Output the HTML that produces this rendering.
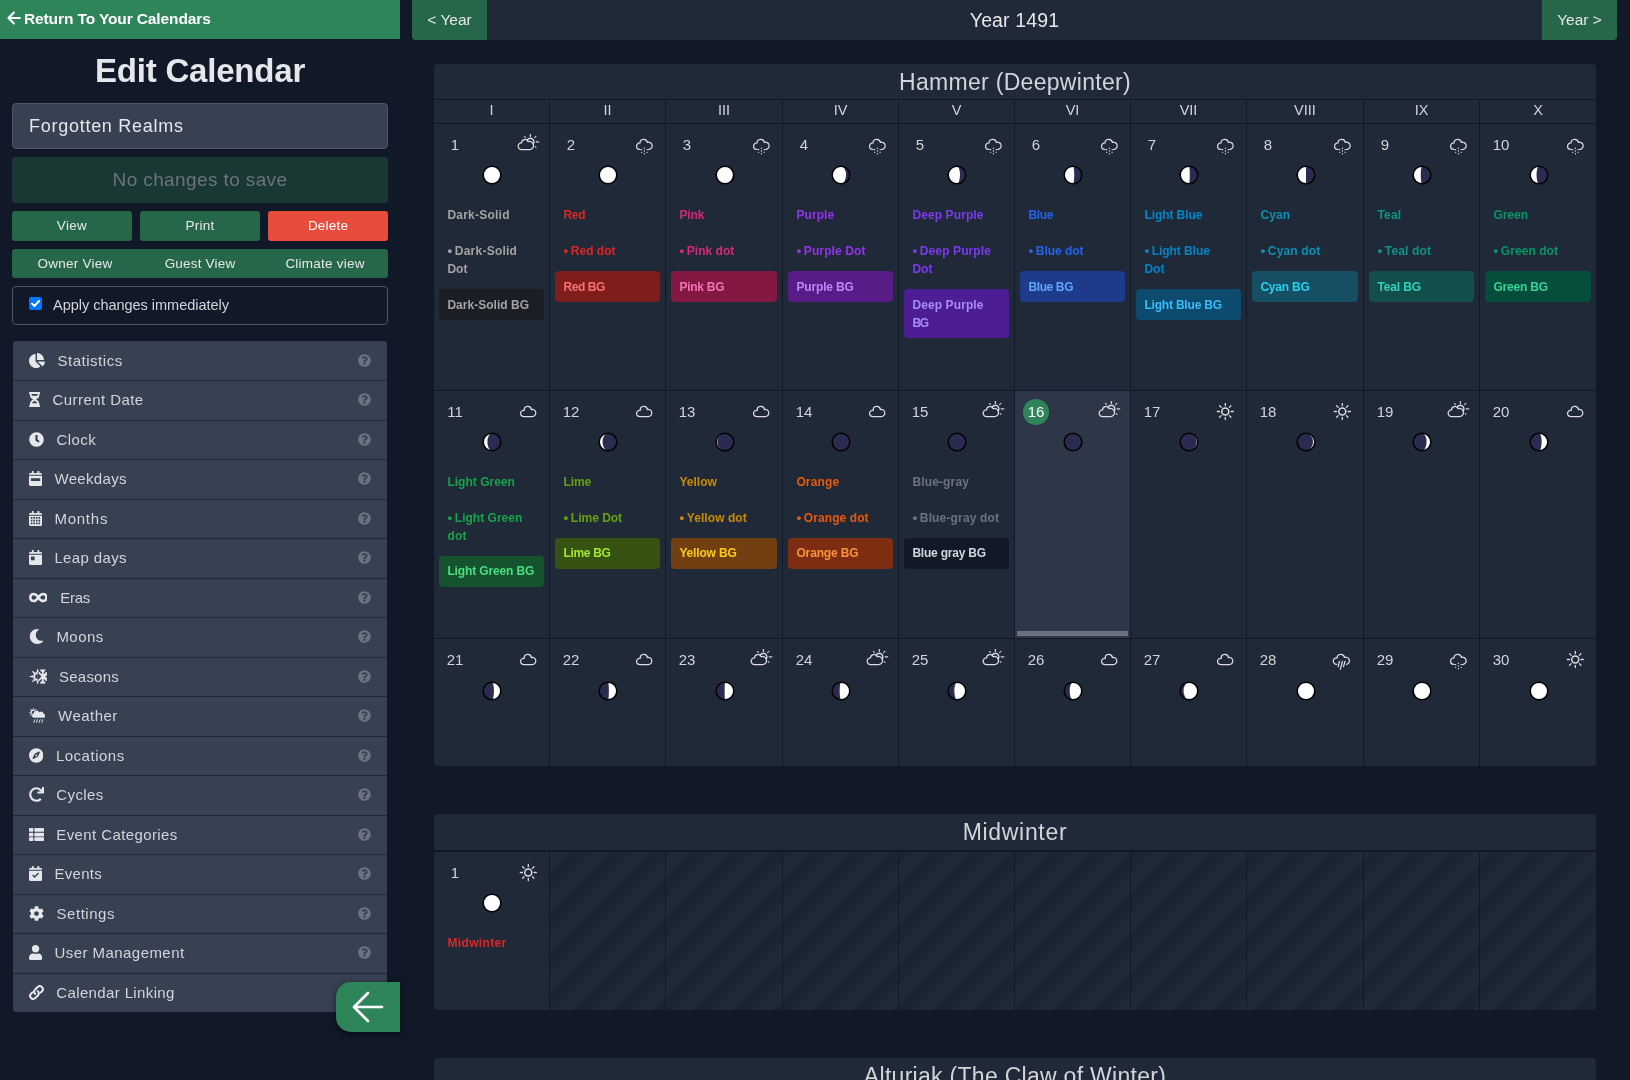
<!DOCTYPE html>
<html lang="en">
<head>
<meta charset="utf-8">
<title>Edit Calendar - Forgotten Realms</title>
<style>
*{box-sizing:border-box;}
html,body{margin:0;padding:0;}
body{width:1630px;height:1080px;overflow:hidden;background:#111827;color:#d1d5db;font-family:"Liberation Sans",sans-serif;position:relative;}
svg{display:block;}
/* ---------- sidebar ---------- */
#wrap{position:absolute;left:0;top:0;width:1630px;height:1080px;overflow:hidden;will-change:transform;}
#side{position:absolute;left:0;top:0;width:400px;height:1080px;}
#ret{position:absolute;left:0;top:0;width:400px;height:39px;background:#2f855a;color:#fff;font-weight:bold;font-size:15.5px;line-height:39px;}
#ret svg{position:absolute;left:7.2px;top:11.3px;}
#ret span{position:absolute;left:24px;top:-1px;white-space:nowrap;}
#title{position:absolute;left:0;top:49px;width:400px;text-align:center;font-weight:bold;font-size:33px;line-height:44px;color:#e5e7eb;white-space:nowrap;}
#name{position:absolute;left:12px;top:103px;width:376px;height:46px;background:#374151;border:1px solid #4b5563;border-radius:4px;color:#e5e7eb;font-size:18px;line-height:44px;padding-left:16px;white-space:nowrap;}
#save{position:absolute;left:12px;top:157px;width:376px;height:46px;background:#1a3833;border-radius:4px;color:#6b7280;font-size:19px;line-height:46px;text-align:center;white-space:nowrap;}
.btn{position:absolute;top:211px;width:120px;height:30px;border-radius:3px;background:#276749;color:#e5e7eb;font-size:13.5px;line-height:30px;text-align:center;white-space:nowrap;}
#grp{position:absolute;left:12px;top:249px;width:376px;height:29px;border-radius:3px;background:#276749;color:#e5e7eb;font-size:13.5px;line-height:29px;white-space:nowrap;}
#grp span{position:absolute;top:0;text-align:center;}
#apply{position:absolute;left:12px;top:286px;width:376px;height:39px;border:1px solid #4b5563;border-radius:4px;color:#d1d5db;font-size:14.5px;line-height:37px;white-space:nowrap;}
#apply i{position:absolute;left:16px;top:10px;width:13px;height:13px;background:#0075ff;border-radius:2px;}
#apply i svg{position:absolute;left:1px;top:1px;}
#apply span{position:absolute;left:40px;top:0;}
#acc{position:absolute;left:13px;top:341px;width:374px;height:671px;background:#374151;border-radius:3px;overflow:hidden;}
.it{position:absolute;left:0;width:374px;height:39.5px;border-bottom:1px solid #1f2937;color:#d1d5db;font-size:15px;white-space:nowrap;}
.it .ic{position:absolute;left:15.6px;top:11.6px;}
.it .tx{position:absolute;top:0;line-height:38.5px;}
.it .q{position:absolute;left:345px;top:12.4px;}
#fab{position:absolute;left:336px;top:982px;width:64px;height:50px;background:#2f855a;border-radius:15px 0 0 15px;box-shadow:0 2px 6px rgba(0,0,0,.5);}
#fab svg{position:absolute;left:15px;top:7.800px;}
/* ---------- main ---------- */
#top{position:absolute;left:412px;top:0;width:1205px;height:40px;background:#1f2937;border-radius:0 0 4px 4px;overflow:hidden;color:#e5e7eb;}
#top .yb{position:absolute;top:0;width:75px;height:40px;background:#276749;color:#e5e7eb;font-size:15.5px;line-height:39px;text-align:center;white-space:nowrap;}
#top .yt{position:absolute;left:0;top:0;width:1205px;text-align:center;font-size:19.5px;line-height:40px;white-space:nowrap;}
.card{position:absolute;left:434px;width:1162px;background:#111827;border-radius:4px;overflow:hidden;}
.mt{position:absolute;left:0;top:0;width:1162px;height:35px;background:#1f2937;color:#d1d5db;text-align:center;font-size:23px;line-height:37px;white-space:nowrap;}
.grid{position:absolute;left:0;width:1162px;display:grid;grid-template-columns:115px 115px 116px 115px 115px 115px 115px 116px 115px 116px;column-gap:1px;}
.wd{background:#1f2937;color:#d1d5db;text-align:center;font-size:14.5px;line-height:20px;}
.day{position:relative;background:#1f2937;overflow:hidden;}
.day.today{background:#2e3748;}
.stripes{position:absolute;left:116px;top:0;width:1046px;height:158px;background:repeating-linear-gradient(135deg,rgba(17,24,39,.3) 0 1.3px,rgba(17,24,39,0) 1.3px 15.5px,rgba(17,24,39,.3) 15.5px 28.28px);}
.num{position:absolute;left:8px;top:8px;width:26px;height:26px;border-radius:13px;text-align:center;font-size:15px;line-height:26px;color:#d1d5db;}
.today .num{background:#2f855a;color:#fff;}
.wi{position:absolute;right:0;top:0;}
.mn{position:absolute;left:50%;margin-left:-9.500px;top:41px;}
.evs{position:absolute;left:5px;right:5px;top:74.5px;}
.ev{margin-bottom:5px;padding:7.5px 4px 5.5px 8.4px;border-radius:4px;font-weight:bold;font-size:12px;line-height:18px;white-space:nowrap;}
.dot{font-weight:bold;font-size:13.5px;line-height:12px;margin-right:2.7px;}
.bar{position:absolute;left:2px;right:2px;bottom:2px;height:5px;background:#6b7280;}
.r2 .ev.bg{padding-top:6.5px;padding-bottom:6.5px;}
.r3 .mn{top:42px;}
#sb{position:absolute;left:1617px;top:0;width:13px;height:1080px;background:#121a2a;}
</style>
</head>
<body>
<div id="wrap">
<div id="side">
  <div id="ret"><svg width="14" height="14" viewBox="0 0 14 14"><path d="M12.8 7H2M6.9 1.600L1.5 7l5.400 5.400" fill="none" stroke="#fff" stroke-width="2.1" stroke-linecap="round" stroke-linejoin="round"/></svg><span style="letter-spacing:-0.117px">Return To Your Calendars</span></div>
  <div id="title"><span style="letter-spacing:-0.202px">Edit Calendar</span></div>
  <div id="name"><span style="letter-spacing:0.729px">Forgotten Realms</span></div>
  <div id="save"><span style="letter-spacing:0.386px">No changes to save</span></div>
  <div class="btn" style="left:12px"><span style="letter-spacing:0.327px">View</span></div>
  <div class="btn" style="left:140px"><span style="letter-spacing:0.21px">Print</span></div>
  <div class="btn" style="left:268px;background:#e74c3c;color:#fff"><span style="letter-spacing:0.195px">Delete</span></div>
  <div id="grp"><span style="left:0;width:126px;letter-spacing:0.23px">Owner View</span><span style="left:126px;width:124px;letter-spacing:0.19px">Guest View</span><span style="left:250px;width:126px;letter-spacing:0.225px">Climate view</span></div>
  <div id="apply"><i><svg width="11" height="11" viewBox="0 0 11 11"><path d="M2 5.6l2.400 2.400L9 3" fill="none" stroke="#fff" stroke-width="2" stroke-linecap="round" stroke-linejoin="round"/></svg></i><span style="letter-spacing:-0.021px">Apply changes immediately</span></div>
  <div id="acc">
<div class="it" style="top:0.60px"><svg class="ic" style="top:11.40px" width="15.94" height="15" viewBox="0 0 544 512" fill="#e5e7eb" ><path d="M527.8 288H290.5l158 158c6 6 16 6.500 22.200.800 38.700-36.500 65.300-85.600 73.100-140.900 1.300-9.500-6.500-17.900-16-17.900zM512 223.200C503.700 103.800 408.200 8.300 288.800 0 279.700-.600 272 7.100 272 16.200V240h223.800c9.100 0 16.800-7.700 16.200-16.800zM224 288V50.700c0-9.500-8.400-17.300-17.900-16C86.900 51.500-4.200 155.600.100 280.400 4.600 408.500 114.900 513.600 243.100 512c50.400-.600 96.900-16.900 135.200-44 7.900-5.600 8.400-17.200 1.600-24L224 288z"/></svg><span class="tx" style="left:44.4px;letter-spacing:0.532px">Statistics</span><svg class="q" style="top:12.40px" width="13" height="13" viewBox="0 0 512 512" fill="#6b7280"><path d="M504 256c0 136.997-111.043 248-248 248S8 392.997 8 256C8 119.083 119.043 8 256 8s248 111.083 248 248zM262.655 90c-54.497 0-89.255 22.957-116.549 63.758-3.536 5.286-2.353 12.415 2.715 16.258l34.699 26.310c5.205 3.947 12.621 3.008 16.665-2.122 17.864-22.658 30.113-35.797 57.303-35.797 20.429 0 45.698 13.148 45.698 32.958 0 14.976-12.363 22.667-32.534 33.976C247.128 238.528 216 254.941 216 296v4c0 6.627 5.373 12 12 12h56c6.627 0 12-5.373 12-12v-1.333c0-28.462 83.186-29.647 83.186-106.667 0-58.002-60.165-102-116.531-102zM256 338c-25.365 0-46 20.635-46 46 0 25.364 20.635 46 46 46s46-20.636 46-46c0-25.365-20.635-46-46-46z"/></svg></div>
<div class="it" style="top:40.10px"><svg class="ic" style="top:10.90px" width="11.25" height="15" viewBox="0 0 384 512" fill="#e5e7eb" ><path d="M360 0H24C10.700 0 0 10.700 0 24v16c0 13.300 10.700 24 24 24 0 91 51 167.700 120.800 192C75 280.300 24 357 24 448c-13.300 0-24 10.700-24 24v16c0 13.300 10.700 24 24 24h336c13.300 0 24-10.700 24-24v-16c0-13.300-10.700-24-24-24 0-91-51-167.700-120.800-192C309 231.700 360 155 360 64c13.300 0 24-10.700 24-24V24c0-13.300-10.700-24-24-24zm-75.100 384H99.100c17.100-46.800 52.100-80 92.900-80 40.700 0 75.800 33.200 92.900 80zm0-256H99.100C92.500 108.800 88 87.200 88 64h208c0 23.200-4.500 44.800-11.100 64z"/></svg><span class="tx" style="left:39.6px;letter-spacing:0.421px">Current Date</span><svg class="q" style="top:11.90px" width="13" height="13" viewBox="0 0 512 512" fill="#6b7280"><path d="M504 256c0 136.997-111.043 248-248 248S8 392.997 8 256C8 119.083 119.043 8 256 8s248 111.083 248 248zM262.655 90c-54.497 0-89.255 22.957-116.549 63.758-3.536 5.286-2.353 12.415 2.715 16.258l34.699 26.310c5.205 3.947 12.621 3.008 16.665-2.122 17.864-22.658 30.113-35.797 57.303-35.797 20.429 0 45.698 13.148 45.698 32.958 0 14.976-12.363 22.667-32.534 33.976C247.128 238.528 216 254.941 216 296v4c0 6.627 5.373 12 12 12h56c6.627 0 12-5.373 12-12v-1.333c0-28.462 83.186-29.647 83.186-106.667 0-58.002-60.165-102-116.531-102zM256 338c-25.365 0-46 20.635-46 46 0 25.364 20.635 46 46 46s46-20.636 46-46c0-25.365-20.635-46-46-46z"/></svg></div>
<div class="it" style="top:79.60px"><svg class="ic" style="top:11.40px" width="15" height="15" viewBox="0 0 512 512" fill="#e5e7eb" ><path d="M256 8C119 8 8 119 8 256s111 248 248 248 248-111 248-248S393 8 256 8zm57.100 350.100L224.900 294c-3.100-2.300-4.900-5.900-4.900-9.700V116c0-6.600 5.400-12 12-12h48c6.600 0 12 5.400 12 12v137.700l63.500 46.200c5.400 3.900 6.500 11.400 2.600 16.800l-28.200 38.800c-3.900 5.300-11.400 6.500-16.800 2.600z"/></svg><span class="tx" style="left:43.4px;letter-spacing:0.473px">Clock</span><svg class="q" style="top:12.40px" width="13" height="13" viewBox="0 0 512 512" fill="#6b7280"><path d="M504 256c0 136.997-111.043 248-248 248S8 392.997 8 256C8 119.083 119.043 8 256 8s248 111.083 248 248zM262.655 90c-54.497 0-89.255 22.957-116.549 63.758-3.536 5.286-2.353 12.415 2.715 16.258l34.699 26.310c5.205 3.947 12.621 3.008 16.665-2.122 17.864-22.658 30.113-35.797 57.303-35.797 20.429 0 45.698 13.148 45.698 32.958 0 14.976-12.363 22.667-32.534 33.976C247.128 238.528 216 254.941 216 296v4c0 6.627 5.373 12 12 12h56c6.627 0 12-5.373 12-12v-1.333c0-28.462 83.186-29.647 83.186-106.667 0-58.002-60.165-102-116.531-102zM256 338c-25.365 0-46 20.635-46 46 0 25.364 20.635 46 46 46s46-20.636 46-46c0-25.365-20.635-46-46-46z"/></svg></div>
<div class="it" style="top:119.10px"><svg class="ic" style="top:10.90px" width="13.125" height="15" viewBox="0 0 448 512" fill="#e5e7eb" ><path fill-rule="evenodd" d="M0 128h448v-16c0-26.500-21.500-48-48-48h-48V16c0-8.800-7.200-16-16-16h-32c-8.800 0-16 7.200-16 16v48H160V16c0-8.800-7.200-16-16-16h-32c-8.800 0-16 7.200-16 16v48H48C21.500 64 0 85.500 0 112v16zM0 160v304c0 26.500 21.500 48 48 48h352c26.500 0 48-21.500 48-48V160H0zM64 264c0-8.800 7.200-16 16-16h288c8.800 0 16 7.200 16 16v64c0 8.800-7.200 16-16 16H80c-8.800 0-16-7.200-16-16v-64z"/></svg><span class="tx" style="left:41.4px;letter-spacing:0.349px">Weekdays</span><svg class="q" style="top:11.90px" width="13" height="13" viewBox="0 0 512 512" fill="#6b7280"><path d="M504 256c0 136.997-111.043 248-248 248S8 392.997 8 256C8 119.083 119.043 8 256 8s248 111.083 248 248zM262.655 90c-54.497 0-89.255 22.957-116.549 63.758-3.536 5.286-2.353 12.415 2.715 16.258l34.699 26.310c5.205 3.947 12.621 3.008 16.665-2.122 17.864-22.658 30.113-35.797 57.303-35.797 20.429 0 45.698 13.148 45.698 32.958 0 14.976-12.363 22.667-32.534 33.976C247.128 238.528 216 254.941 216 296v4c0 6.627 5.373 12 12 12h56c6.627 0 12-5.373 12-12v-1.333c0-28.462 83.186-29.647 83.186-106.667 0-58.002-60.165-102-116.531-102zM256 338c-25.365 0-46 20.635-46 46 0 25.364 20.635 46 46 46s46-20.636 46-46c0-25.365-20.635-46-46-46z"/></svg></div>
<div class="it" style="top:158.60px"><svg class="ic" style="top:11.40px" width="13.125" height="15" viewBox="0 0 448 512" fill="#e5e7eb" ><path fill-rule="evenodd" d="M0 128h448v-16c0-26.500-21.500-48-48-48h-48V16c0-8.800-7.200-16-16-16h-32c-8.800 0-16 7.200-16 16v48H160V16c0-8.800-7.200-16-16-16h-32c-8.800 0-16 7.200-16 16v48H48C21.500 64 0 85.500 0 112v16zM0 160v304c0 26.500 21.500 48 48 48h352c26.500 0 48-21.500 48-48V160H0zM60 208h56v56h-56zM148 208h56v56h-56zM236 208h56v56h-56zM324 208h56v56h-56zM60 300h56v56h-56zM148 300h56v56h-56zM236 300h56v56h-56zM324 300h56v56h-56zM60 392h56v56h-56zM148 392h56v56h-56zM236 392h56v56h-56zM324 392h56v56h-56z"/></svg><span class="tx" style="left:41.4px;letter-spacing:0.762px">Months</span><svg class="q" style="top:12.40px" width="13" height="13" viewBox="0 0 512 512" fill="#6b7280"><path d="M504 256c0 136.997-111.043 248-248 248S8 392.997 8 256C8 119.083 119.043 8 256 8s248 111.083 248 248zM262.655 90c-54.497 0-89.255 22.957-116.549 63.758-3.536 5.286-2.353 12.415 2.715 16.258l34.699 26.310c5.205 3.947 12.621 3.008 16.665-2.122 17.864-22.658 30.113-35.797 57.303-35.797 20.429 0 45.698 13.148 45.698 32.958 0 14.976-12.363 22.667-32.534 33.976C247.128 238.528 216 254.941 216 296v4c0 6.627 5.373 12 12 12h56c6.627 0 12-5.373 12-12v-1.333c0-28.462 83.186-29.647 83.186-106.667 0-58.002-60.165-102-116.531-102zM256 338c-25.365 0-46 20.635-46 46 0 25.364 20.635 46 46 46s46-20.636 46-46c0-25.365-20.635-46-46-46z"/></svg></div>
<div class="it" style="top:198.10px"><svg class="ic" style="top:10.90px" width="13.125" height="15" viewBox="0 0 448 512" fill="#e5e7eb" ><path fill-rule="evenodd" d="M0 128h448v-16c0-26.500-21.500-48-48-48h-48V16c0-8.800-7.200-16-16-16h-32c-8.800 0-16 7.200-16 16v48H160V16c0-8.800-7.200-16-16-16h-32c-8.800 0-16 7.200-16 16v48H48C21.500 64 0 85.500 0 112v16zM0 160v304c0 26.500 21.500 48 48 48h352c26.500 0 48-21.500 48-48V160H0zM64 240c0-8.800 7.200-16 16-16h96c8.800 0 16 7.200 16 16v96c0 8.800-7.200 16-16 16H80c-8.800 0-16-7.200-16-16v-96z"/></svg><span class="tx" style="left:41.4px;letter-spacing:0.372px">Leap days</span><svg class="q" style="top:11.90px" width="13" height="13" viewBox="0 0 512 512" fill="#6b7280"><path d="M504 256c0 136.997-111.043 248-248 248S8 392.997 8 256C8 119.083 119.043 8 256 8s248 111.083 248 248zM262.655 90c-54.497 0-89.255 22.957-116.549 63.758-3.536 5.286-2.353 12.415 2.715 16.258l34.699 26.310c5.205 3.947 12.621 3.008 16.665-2.122 17.864-22.658 30.113-35.797 57.303-35.797 20.429 0 45.698 13.148 45.698 32.958 0 14.976-12.363 22.667-32.534 33.976C247.128 238.528 216 254.941 216 296v4c0 6.627 5.373 12 12 12h56c6.627 0 12-5.373 12-12v-1.333c0-28.462 83.186-29.647 83.186-106.667 0-58.002-60.165-102-116.531-102zM256 338c-25.365 0-46 20.635-46 46 0 25.364 20.635 46 46 46s46-20.636 46-46c0-25.365-20.635-46-46-46z"/></svg></div>
<div class="it" style="top:237.60px"><svg class="ic" style="top:11.40px" width="18.75" height="15" viewBox="0 0 640 512" fill="#e5e7eb" ><path fill="none" stroke="#e5e7eb" stroke-width="86" d="M320 256c-52-80-96-122-160-122-66 0-117 54-117 122s51 122 117 122c64 0 108-42 160-122zM320 256c52-80 96-122 160-122 66 0 117 54 117 122s-51 122-117 122c-64 0-108-42-160-122z"/></svg><span class="tx" style="left:47.2px;letter-spacing:-0.248px">Eras</span><svg class="q" style="top:12.40px" width="13" height="13" viewBox="0 0 512 512" fill="#6b7280"><path d="M504 256c0 136.997-111.043 248-248 248S8 392.997 8 256C8 119.083 119.043 8 256 8s248 111.083 248 248zM262.655 90c-54.497 0-89.255 22.957-116.549 63.758-3.536 5.286-2.353 12.415 2.715 16.258l34.699 26.310c5.205 3.947 12.621 3.008 16.665-2.122 17.864-22.658 30.113-35.797 57.303-35.797 20.429 0 45.698 13.148 45.698 32.958 0 14.976-12.363 22.667-32.534 33.976C247.128 238.528 216 254.941 216 296v4c0 6.627 5.373 12 12 12h56c6.627 0 12-5.373 12-12v-1.333c0-28.462 83.186-29.647 83.186-106.667 0-58.002-60.165-102-116.531-102zM256 338c-25.365 0-46 20.635-46 46 0 25.364 20.635 46 46 46s46-20.636 46-46c0-25.365-20.635-46-46-46z"/></svg></div>
<div class="it" style="top:277.10px"><svg class="ic" style="top:10.90px" width="15" height="15" viewBox="0 0 512 512" fill="#e5e7eb" ><path d="M283.211 512c78.962 0 151.079-35.925 198.857-94.792 7.068-8.708-.639-21.430-11.562-19.350-124.203 23.654-238.262-71.576-238.262-196.954 0-72.222 38.662-138.635 101.498-174.394 9.686-5.512 7.250-20.197-3.756-22.230A258.156 258.156 0 0 0 283.211 0c-141.309 0-256 114.511-256 256 0 141.309 114.511 256 256 256z"/></svg><span class="tx" style="left:43.4px;letter-spacing:0.469px">Moons</span><svg class="q" style="top:11.90px" width="13" height="13" viewBox="0 0 512 512" fill="#6b7280"><path d="M504 256c0 136.997-111.043 248-248 248S8 392.997 8 256C8 119.083 119.043 8 256 8s248 111.083 248 248zM262.655 90c-54.497 0-89.255 22.957-116.549 63.758-3.536 5.286-2.353 12.415 2.715 16.258l34.699 26.310c5.205 3.947 12.621 3.008 16.665-2.122 17.864-22.658 30.113-35.797 57.303-35.797 20.429 0 45.698 13.148 45.698 32.958 0 14.976-12.363 22.667-32.534 33.976C247.128 238.528 216 254.941 216 296v4c0 6.627 5.373 12 12 12h56c6.627 0 12-5.373 12-12v-1.333c0-28.462 83.186-29.647 83.186-106.667 0-58.002-60.165-102-116.531-102zM256 338c-25.365 0-46 20.635-46 46 0 25.364 20.635 46 46 46s46-20.636 46-46c0-25.365-20.635-46-46-46z"/></svg></div>
<div class="it" style="top:316.60px"><svg class="ic" style="top:11.40px" width="18.75" height="15" viewBox="0 0 640 512" fill="#e5e7eb" ><path d="M334.6 411.3L296.0 548.0L257.4 411.3zM213.5 393.1L89.5 462.5L158.9 338.5zM140.7 294.6L4.0 256.0L140.7 217.4zM158.9 173.5L89.5 49.5L213.5 118.9zM257.4 100.7L296.0 -36.0L334.6 100.7z"/><path d="M296 104a152 152 0 0 0 0 304z"/><path fill="#374151" d="M296 170a86 86 0 0 0 0 172z"/><path fill="none" stroke="#e5e7eb" stroke-width="58" stroke-linecap="round" d="M470 34v444M346 130l240 252M346 382l240-252M410 40l60 62 60-62M410 472l60-62 60 62M606 196l-76 22 14 78M606 316l-76-22 14-78"/></svg><span class="tx" style="left:46.1px;letter-spacing:0.204px">Seasons</span><svg class="q" style="top:12.40px" width="13" height="13" viewBox="0 0 512 512" fill="#6b7280"><path d="M504 256c0 136.997-111.043 248-248 248S8 392.997 8 256C8 119.083 119.043 8 256 8s248 111.083 248 248zM262.655 90c-54.497 0-89.255 22.957-116.549 63.758-3.536 5.286-2.353 12.415 2.715 16.258l34.699 26.310c5.205 3.947 12.621 3.008 16.665-2.122 17.864-22.658 30.113-35.797 57.303-35.797 20.429 0 45.698 13.148 45.698 32.958 0 14.976-12.363 22.667-32.534 33.976C247.128 238.528 216 254.941 216 296v4c0 6.627 5.373 12 12 12h56c6.627 0 12-5.373 12-12v-1.333c0-28.462 83.186-29.647 83.186-106.667 0-58.002-60.165-102-116.531-102zM256 338c-25.365 0-46 20.635-46 46 0 25.364 20.635 46 46 46s46-20.636 46-46c0-25.365-20.635-46-46-46z"/></svg></div>
<div class="it" style="top:356.10px"><svg class="ic" style="top:10.90px" width="16.875" height="15" viewBox="0 0 576 512" fill="#e5e7eb" ><path d="M250.9 124.9L320.0 150.0L250.9 175.1zM239.1 203.6L270.2 270.2L203.6 239.1zM175.1 250.9L150.0 320.0L124.9 250.9zM96.4 239.1L29.8 270.2L60.9 203.6zM49.1 175.1L-20.0 150.0L49.1 124.9zM60.9 96.4L29.8 29.8L96.4 60.9zM124.9 49.1L150.0 -20.0L175.1 49.1zM203.6 60.9L270.2 29.8L239.1 96.4z"/><circle cx="150" cy="150" r="96"/><circle cx="150" cy="150" r="58" fill="#374151"/><path stroke="#374151" stroke-width="26" d="M510 192c-8-46-46-80-94-80-22 0-44 8-60 22-20-32-54-54-96-54-58 0-106 44-112 100-36 10-62 42-62 80 0 46 38 84 84 84h328c40 0 72-32 72-72 0-38-26-70-60-80z"/><path fill="none" stroke="#e5e7eb" stroke-width="32" stroke-linecap="round" d="M200 400l-36 90M290 400l-36 90M380 400l-36 90M470 400l-36 90"/></svg><span class="tx" style="left:45.1px;letter-spacing:0.463px">Weather</span><svg class="q" style="top:11.90px" width="13" height="13" viewBox="0 0 512 512" fill="#6b7280"><path d="M504 256c0 136.997-111.043 248-248 248S8 392.997 8 256C8 119.083 119.043 8 256 8s248 111.083 248 248zM262.655 90c-54.497 0-89.255 22.957-116.549 63.758-3.536 5.286-2.353 12.415 2.715 16.258l34.699 26.310c5.205 3.947 12.621 3.008 16.665-2.122 17.864-22.658 30.113-35.797 57.303-35.797 20.429 0 45.698 13.148 45.698 32.958 0 14.976-12.363 22.667-32.534 33.976C247.128 238.528 216 254.941 216 296v4c0 6.627 5.373 12 12 12h56c6.627 0 12-5.373 12-12v-1.333c0-28.462 83.186-29.647 83.186-106.667 0-58.002-60.165-102-116.531-102zM256 338c-25.365 0-46 20.635-46 46 0 25.364 20.635 46 46 46s46-20.636 46-46c0-25.365-20.635-46-46-46z"/></svg></div>
<div class="it" style="top:395.60px"><svg class="ic" style="top:11.40px" width="14.53" height="15" viewBox="0 0 496 512" fill="#e5e7eb" ><path fill-rule="evenodd" d="M248 8a248 248 0 1 0 0 496 248 248 0 0 0 0-496zM374 145l-66 145c-3 7-9 13-16 16l-145 66c-16 7-33-10-26-26l66-145c3-7 9-13 16-16l145-66c16-7 33 10 26 26zM248 224a32 32 0 1 0 0 64 32 32 0 0 0 0-64z"/></svg><span class="tx" style="left:42.9px;letter-spacing:0.511px">Locations</span><svg class="q" style="top:12.40px" width="13" height="13" viewBox="0 0 512 512" fill="#6b7280"><path d="M504 256c0 136.997-111.043 248-248 248S8 392.997 8 256C8 119.083 119.043 8 256 8s248 111.083 248 248zM262.655 90c-54.497 0-89.255 22.957-116.549 63.758-3.536 5.286-2.353 12.415 2.715 16.258l34.699 26.310c5.205 3.947 12.621 3.008 16.665-2.122 17.864-22.658 30.113-35.797 57.303-35.797 20.429 0 45.698 13.148 45.698 32.958 0 14.976-12.363 22.667-32.534 33.976C247.128 238.528 216 254.941 216 296v4c0 6.627 5.373 12 12 12h56c6.627 0 12-5.373 12-12v-1.333c0-28.462 83.186-29.647 83.186-106.667 0-58.002-60.165-102-116.531-102zM256 338c-25.365 0-46 20.635-46 46 0 25.364 20.635 46 46 46s46-20.636 46-46c0-25.365-20.635-46-46-46z"/></svg></div>
<div class="it" style="top:435.10px"><svg class="ic" style="top:10.90px" width="15" height="15" viewBox="0 0 512 512" fill="#e5e7eb" ><path d="M500.300 0h-47.400a12 12 0 0 0-12 12.600l4 82.800A247.400 247.400 0 0 0 256 8C119.300 8 7.900 119.500 8 256.200 8.100 393.100 119.100 504 256 504a247.100 247.100 0 0 0 166.200-63.900 12 12 0 0 0 .500-17.400l-34-34a12 12 0 0 0-16.400-.500A176 176 0 1 1 402.100 157.800l-101.500-4.900a12 12 0 0 0-12.600 12v47.400a12 12 0 0 0 12 12h200.300a12 12 0 0 0 12-12V12a12 12 0 0 0-12-12z"/></svg><span class="tx" style="left:43.3px;letter-spacing:0.378px">Cycles</span><svg class="q" style="top:11.90px" width="13" height="13" viewBox="0 0 512 512" fill="#6b7280"><path d="M504 256c0 136.997-111.043 248-248 248S8 392.997 8 256C8 119.083 119.043 8 256 8s248 111.083 248 248zM262.655 90c-54.497 0-89.255 22.957-116.549 63.758-3.536 5.286-2.353 12.415 2.715 16.258l34.699 26.310c5.205 3.947 12.621 3.008 16.665-2.122 17.864-22.658 30.113-35.797 57.303-35.797 20.429 0 45.698 13.148 45.698 32.958 0 14.976-12.363 22.667-32.534 33.976C247.128 238.528 216 254.941 216 296v4c0 6.627 5.373 12 12 12h56c6.627 0 12-5.373 12-12v-1.333c0-28.462 83.186-29.647 83.186-106.667 0-58.002-60.165-102-116.531-102zM256 338c-25.365 0-46 20.635-46 46 0 25.364 20.635 46 46 46s46-20.636 46-46c0-25.365-20.635-46-46-46z"/></svg></div>
<div class="it" style="top:474.60px"><svg class="ic" style="top:11.40px" width="15" height="15" viewBox="0 0 512 512" fill="#e5e7eb" ><path d="M149.300 216v80c0 13.300-10.700 24-24 24H24c-13.300 0-24-10.700-24-24v-80c0-13.300 10.700-24 24-24h101.300c13.300 0 24 10.700 24 24zM0 376v80c0 13.300 10.700 24 24 24h101.300c13.300 0 24-10.700 24-24v-80c0-13.300-10.700-24-24-24H24c-13.300 0-24 10.700-24 24zM125.300 32H24C10.700 32 0 42.700 0 56v80c0 13.300 10.700 24 24 24h101.300c13.300 0 24-10.700 24-24V56c0-13.300-10.700-24-24-24zm80 448H488c13.300 0 24-10.700 24-24v-80c0-13.300-10.700-24-24-24H205.300c-13.300 0-24 10.700-24 24v80c0 13.300 10.700 24 24 24zm-24-424v80c0 13.300 10.700 24 24 24H488c13.300 0 24-10.700 24-24V56c0-13.300-10.700-24-24-24H205.300c-13.300 0-24 10.700-24 24zm24 264H488c13.300 0 24-10.700 24-24v-80c0-13.300-10.700-24-24-24H205.300c-13.300 0-24 10.700-24 24v80c0 13.300 10.700 24 24 24z"/></svg><span class="tx" style="left:43.3px;letter-spacing:0.396px">Event Categories</span><svg class="q" style="top:12.40px" width="13" height="13" viewBox="0 0 512 512" fill="#6b7280"><path d="M504 256c0 136.997-111.043 248-248 248S8 392.997 8 256C8 119.083 119.043 8 256 8s248 111.083 248 248zM262.655 90c-54.497 0-89.255 22.957-116.549 63.758-3.536 5.286-2.353 12.415 2.715 16.258l34.699 26.310c5.205 3.947 12.621 3.008 16.665-2.122 17.864-22.658 30.113-35.797 57.303-35.797 20.429 0 45.698 13.148 45.698 32.958 0 14.976-12.363 22.667-32.534 33.976C247.128 238.528 216 254.941 216 296v4c0 6.627 5.373 12 12 12h56c6.627 0 12-5.373 12-12v-1.333c0-28.462 83.186-29.647 83.186-106.667 0-58.002-60.165-102-116.531-102zM256 338c-25.365 0-46 20.635-46 46 0 25.364 20.635 46 46 46s46-20.636 46-46c0-25.365-20.635-46-46-46z"/></svg></div>
<div class="it" style="top:514.10px"><svg class="ic" style="top:10.90px" width="13.125" height="15" viewBox="0 0 448 512" fill="#e5e7eb" ><path fill-rule="evenodd" d="M0 128h448v-16c0-26.500-21.500-48-48-48h-48V16c0-8.800-7.200-16-16-16h-32c-8.800 0-16 7.200-16 16v48H160V16c0-8.800-7.200-16-16-16h-32c-8.800 0-16 7.200-16 16v48H48C21.500 64 0 85.500 0 112v16zM0 160v304c0 26.500 21.500 48 48 48h352c26.500 0 48-21.500 48-48V160H0zM106 322l34-34 52 52 116-116 34 34-150 150z"/></svg><span class="tx" style="left:41.5px;letter-spacing:0.288px">Events</span><svg class="q" style="top:11.90px" width="13" height="13" viewBox="0 0 512 512" fill="#6b7280"><path d="M504 256c0 136.997-111.043 248-248 248S8 392.997 8 256C8 119.083 119.043 8 256 8s248 111.083 248 248zM262.655 90c-54.497 0-89.255 22.957-116.549 63.758-3.536 5.286-2.353 12.415 2.715 16.258l34.699 26.310c5.205 3.947 12.621 3.008 16.665-2.122 17.864-22.658 30.113-35.797 57.303-35.797 20.429 0 45.698 13.148 45.698 32.958 0 14.976-12.363 22.667-32.534 33.976C247.128 238.528 216 254.941 216 296v4c0 6.627 5.373 12 12 12h56c6.627 0 12-5.373 12-12v-1.333c0-28.462 83.186-29.647 83.186-106.667 0-58.002-60.165-102-116.531-102zM256 338c-25.365 0-46 20.635-46 46 0 25.364 20.635 46 46 46s46-20.636 46-46c0-25.365-20.635-46-46-46z"/></svg></div>
<div class="it" style="top:553.60px"><svg class="ic" style="top:11.40px" width="15" height="15" viewBox="0 0 512 512" fill="#e5e7eb" ><path d="M487.4 315.7l-42.600-24.600c4.300-23.200 4.300-47 0-70.200l42.600-24.600c4.900-2.800 7.100-8.600 5.500-14-11.100-35.600-30-67.800-54.700-94.600-3.800-4.100-10-5.100-14.800-2.300L380.800 110c-17.900-15.400-38.500-27.300-60.800-35.100V25.800c0-5.600-3.900-10.500-9.400-11.700-36.700-8.200-74.300-7.800-109.200 0-5.500 1.200-9.400 6.100-9.400 11.700V75c-22.200 7.900-42.800 19.800-60.800 35.100L88.700 85.500c-4.900-2.800-11-1.900-14.800 2.300-24.700 26.700-43.600 58.900-54.700 94.600-1.700 5.400.6 11.200 5.500 14L67.300 221c-4.300 23.200-4.300 47 0 70.200l-42.600 24.600c-4.900 2.800-7.100 8.600-5.500 14 11.100 35.600 30 67.800 54.700 94.600 3.800 4.100 10 5.100 14.800 2.300l42.600-24.600c17.900 15.400 38.500 27.300 60.800 35.100v49.200c0 5.600 3.900 10.500 9.400 11.700 36.700 8.200 74.300 7.800 109.200 0 5.500-1.200 9.400-6.100 9.400-11.700v-49.200c22.200-7.900 42.800-19.800 60.800-35.100l42.600 24.600c4.900 2.800 11 1.900 14.800-2.300 24.700-26.700 43.600-58.900 54.700-94.600 1.500-5.500-.7-11.300-5.600-14.100zM256 336c-44.100 0-80-35.900-80-80s35.900-80 80-80 80 35.900 80 80-35.900 80-80 80z"/></svg><span class="tx" style="left:43.6px;letter-spacing:0.514px">Settings</span><svg class="q" style="top:12.40px" width="13" height="13" viewBox="0 0 512 512" fill="#6b7280"><path d="M504 256c0 136.997-111.043 248-248 248S8 392.997 8 256C8 119.083 119.043 8 256 8s248 111.083 248 248zM262.655 90c-54.497 0-89.255 22.957-116.549 63.758-3.536 5.286-2.353 12.415 2.715 16.258l34.699 26.310c5.205 3.947 12.621 3.008 16.665-2.122 17.864-22.658 30.113-35.797 57.303-35.797 20.429 0 45.698 13.148 45.698 32.958 0 14.976-12.363 22.667-32.534 33.976C247.128 238.528 216 254.941 216 296v4c0 6.627 5.373 12 12 12h56c6.627 0 12-5.373 12-12v-1.333c0-28.462 83.186-29.647 83.186-106.667 0-58.002-60.165-102-116.531-102zM256 338c-25.365 0-46 20.635-46 46 0 25.364 20.635 46 46 46s46-20.636 46-46c0-25.365-20.635-46-46-46z"/></svg></div>
<div class="it" style="top:593.10px"><svg class="ic" style="top:10.90px" width="13.125" height="15" viewBox="0 0 448 512" fill="#e5e7eb" ><path d="M224 256c70.700 0 128-57.300 128-128S294.700 0 224 0 96 57.300 96 128s57.300 128 128 128zm89.600 32h-16.700c-22.200 10.200-46.900 16-72.900 16s-50.600-5.800-72.900-16h-16.700C60.200 288 0 348.200 0 422.400V464c0 26.500 21.500 48 48 48h352c26.500 0 48-21.500 48-48v-41.600c0-74.200-60.200-134.400-134.400-134.400z"/></svg><span class="tx" style="left:41.5px;letter-spacing:0.443px">User Management</span><svg class="q" style="top:11.90px" width="13" height="13" viewBox="0 0 512 512" fill="#6b7280"><path d="M504 256c0 136.997-111.043 248-248 248S8 392.997 8 256C8 119.083 119.043 8 256 8s248 111.083 248 248zM262.655 90c-54.497 0-89.255 22.957-116.549 63.758-3.536 5.286-2.353 12.415 2.715 16.258l34.699 26.310c5.205 3.947 12.621 3.008 16.665-2.122 17.864-22.658 30.113-35.797 57.303-35.797 20.429 0 45.698 13.148 45.698 32.958 0 14.976-12.363 22.667-32.534 33.976C247.128 238.528 216 254.941 216 296v4c0 6.627 5.373 12 12 12h56c6.627 0 12-5.373 12-12v-1.333c0-28.462 83.186-29.647 83.186-106.667 0-58.002-60.165-102-116.531-102zM256 338c-25.365 0-46 20.635-46 46 0 25.364 20.635 46 46 46s46-20.636 46-46c0-25.365-20.635-46-46-46z"/></svg></div>
<div class="it" style="top:632.60px"><svg class="ic" style="top:11.40px" width="15" height="15" viewBox="0 0 512 512" fill="#e5e7eb" ><g fill="none" stroke="#e5e7eb" stroke-width="70" stroke-linecap="round"><path d="M210 302a104 104 0 0 1 0-147l86-86a104 104 0 0 1 147 147l-44 44"/><path d="M302 210a104 104 0 0 1 0 147l-86 86a104 104 0 0 1-147-147l44-44"/></g></svg><span class="tx" style="left:43.3px;letter-spacing:0.368px">Calendar Linking</span></div>
  </div>
  <div id="fab"><svg width="34" height="34" viewBox="0 0 34 34"><path d="M31 17H3M17 3L3 17l14 14" fill="none" stroke="#fff" stroke-width="2.7" stroke-linecap="round" stroke-linejoin="round"/></svg></div>
</div>
<div id="sb"></div>
<div id="top">
  <div class="yt"><span style="letter-spacing:0.137px">Year 1491</span></div>
  <div class="yb" style="left:0">&lt; Year</div>
  <div class="yb" style="left:1130px">Year &gt;</div>
</div>
<div class="card" style="top:64px;height:702px"><div class="mt"><span style="letter-spacing:0.299px">Hammer (Deepwinter)</span></div><div class="grid" style="top:36px;height:23px"><div class="wd">I</div><div class="wd">II</div><div class="wd">III</div><div class="wd">IV</div><div class="wd">V</div><div class="wd">VI</div><div class="wd">VII</div><div class="wd">VIII</div><div class="wd">IX</div><div class="wd">X</div></div><div class="grid" style="top:60px;height:266px"><div class="day"><span class="num">1</span><svg class="wi" width="36" height="32" viewBox="0 0 36 32" fill="none" stroke="#d9dce1" stroke-width="1.25" stroke-linecap="round" stroke-linejoin="round"><path d="M8.70 25.50A3.30 3.30 0 1 1 8.50 18.91A3.40 3.40 0 0 1 15.07 17.67A4.05 4.05 0 1 1 16.40 25.50z"/><path d="M14.20 16.38A3.5 3.5 0 1 1 20.16 19.95" stroke-width="1.4"/><path d="M17.40 10.50L17.40 12.30" stroke-width="1.25" opacity="1"/><path d="M23.20 17.80L25.70 17.80" stroke-width="1.25" opacity="1"/><path d="M11.40 12.40L12.60 13.60" stroke-width="1.25" opacity="0.8"/><path d="M22.90 12.30L21.60 13.60" stroke-width="1.25" opacity="0.8"/><path d="M22.30 22.50L23.00 23.50" stroke-width="1.25" opacity="0.8"/></svg><svg class="mn" width="20" height="20" viewBox="0 0 20 20"><circle cx="10" cy="10" r="8.8" fill="#fff" stroke="#000" stroke-width="1.55"/></svg><div class="evs"><div class="ev" style="color:#a3a3a3"><span style="letter-spacing:0.232px">Dark-Solid</span></div><div class="ev" style="color:#a3a3a3"><b class="dot">•</b><span style="letter-spacing:0.232px">Dark-Solid</span><br><span style="letter-spacing:0.054px">Dot</span></div><div class="ev bg" style="color:#a3a3a3;background:#1c1e26"><span style="letter-spacing:0.021px">Dark-Solid BG</span></div></div></div><div class="day"><span class="num">2</span><svg class="wi" width="36" height="32" viewBox="0 0 36 32" fill="none" stroke="#d9dce1" stroke-width="1.25" stroke-linecap="round" stroke-linejoin="round"><path d="M10.60 25.39A3.20 3.20 0 1 1 11.00 19.00A3.70 3.70 0 0 1 18.35 18.42A3.60 3.60 0 1 1 20.30 25.33"/><circle cx="15.40" cy="24.30" r="0.68" fill="#d9dce1" stroke="none"/><circle cx="15.40" cy="27.05" r="0.68" fill="#d9dce1" stroke="none"/><circle cx="15.40" cy="29.80" r="0.68" fill="#d9dce1" stroke="none"/><circle cx="12.60" cy="25.65" r="0.68" fill="#d9dce1" stroke="none"/><circle cx="12.60" cy="28.35" r="0.68" fill="#d9dce1" stroke="none"/><circle cx="18.10" cy="25.65" r="0.68" fill="#d9dce1" stroke="none"/><circle cx="18.10" cy="28.35" r="0.68" fill="#d9dce1" stroke="none"/><path d="M11.70 25.50h0.5M18.90 25.50h1.2" stroke-width="1.1"/></svg><svg class="mn" width="20" height="20" viewBox="0 0 20 20"><circle cx="10" cy="10" r="8.8" fill="#fff" stroke="#000" stroke-width="1.55"/></svg><div class="evs"><div class="ev" style="color:#dc2626"><span style="letter-spacing:-0.285px">Red</span></div><div class="ev" style="color:#dc2626"><b class="dot">•</b><span style="letter-spacing:0.006px">Red dot</span></div><div class="ev bg" style="color:#f87171;background:#7f1d1d"><span style="letter-spacing:-0.421px">Red BG</span></div></div></div><div class="day"><span class="num">3</span><svg class="wi" width="36" height="32" viewBox="0 0 36 32" fill="none" stroke="#d9dce1" stroke-width="1.25" stroke-linecap="round" stroke-linejoin="round"><path d="M10.60 25.39A3.20 3.20 0 1 1 11.00 19.00A3.70 3.70 0 0 1 18.35 18.42A3.60 3.60 0 1 1 20.30 25.33"/><circle cx="15.40" cy="24.30" r="0.68" fill="#d9dce1" stroke="none"/><circle cx="15.40" cy="27.05" r="0.68" fill="#d9dce1" stroke="none"/><circle cx="15.40" cy="29.80" r="0.68" fill="#d9dce1" stroke="none"/><circle cx="12.60" cy="25.65" r="0.68" fill="#d9dce1" stroke="none"/><circle cx="12.60" cy="28.35" r="0.68" fill="#d9dce1" stroke="none"/><circle cx="18.10" cy="25.65" r="0.68" fill="#d9dce1" stroke="none"/><circle cx="18.10" cy="28.35" r="0.68" fill="#d9dce1" stroke="none"/><path d="M11.70 25.50h0.5M18.90 25.50h1.2" stroke-width="1.1"/></svg><svg class="mn" width="20" height="20" viewBox="0 0 20 20"><circle cx="10" cy="10" r="8.8" fill="#2b2b52"/><path d="M10 1.1999999999999993A8.8 8.8 0 0 0 10 18.8A7.92 8.8 0 0 0 10 1.1999999999999993z" fill="#fff"/><circle cx="10" cy="10" r="8.8" fill="none" stroke="#000" stroke-width="1.55"/></svg><div class="evs"><div class="ev" style="color:#db2777"><span style="letter-spacing:-0.081px">Pink</span></div><div class="ev" style="color:#db2777"><b class="dot">•</b><span style="letter-spacing:0.024px">Pink dot</span></div><div class="ev bg" style="color:#f472b6;background:#831843"><span style="letter-spacing:-0.263px">Pink BG</span></div></div></div><div class="day"><span class="num">4</span><svg class="wi" width="36" height="32" viewBox="0 0 36 32" fill="none" stroke="#d9dce1" stroke-width="1.25" stroke-linecap="round" stroke-linejoin="round"><path d="M10.60 25.39A3.20 3.20 0 1 1 11.00 19.00A3.70 3.70 0 0 1 18.35 18.42A3.60 3.60 0 1 1 20.30 25.33"/><circle cx="15.40" cy="24.30" r="0.68" fill="#d9dce1" stroke="none"/><circle cx="15.40" cy="27.05" r="0.68" fill="#d9dce1" stroke="none"/><circle cx="15.40" cy="29.80" r="0.68" fill="#d9dce1" stroke="none"/><circle cx="12.60" cy="25.65" r="0.68" fill="#d9dce1" stroke="none"/><circle cx="12.60" cy="28.35" r="0.68" fill="#d9dce1" stroke="none"/><circle cx="18.10" cy="25.65" r="0.68" fill="#d9dce1" stroke="none"/><circle cx="18.10" cy="28.35" r="0.68" fill="#d9dce1" stroke="none"/><path d="M11.70 25.50h0.5M18.90 25.50h1.2" stroke-width="1.1"/></svg><svg class="mn" width="20" height="20" viewBox="0 0 20 20"><circle cx="10" cy="10" r="8.8" fill="#2b2b52"/><path d="M10 1.1999999999999993A8.8 8.8 0 0 0 10 18.8A5.02 8.8 0 0 0 10 1.1999999999999993z" fill="#fff"/><circle cx="10" cy="10" r="8.8" fill="none" stroke="#000" stroke-width="1.55"/></svg><div class="evs"><div class="ev" style="color:#9333ea"><span style="letter-spacing:0.091px">Purple</span></div><div class="ev" style="color:#9333ea"><b class="dot">•</b><span style="letter-spacing:0.103px">Purple Dot</span></div><div class="ev bg" style="color:#c084fc;background:#581c87"><span style="letter-spacing:-0.147px">Purple BG</span></div></div></div><div class="day"><span class="num">5</span><svg class="wi" width="36" height="32" viewBox="0 0 36 32" fill="none" stroke="#d9dce1" stroke-width="1.25" stroke-linecap="round" stroke-linejoin="round"><path d="M10.60 25.39A3.20 3.20 0 1 1 11.00 19.00A3.70 3.70 0 0 1 18.35 18.42A3.60 3.60 0 1 1 20.30 25.33"/><circle cx="15.40" cy="24.30" r="0.68" fill="#d9dce1" stroke="none"/><circle cx="15.40" cy="27.05" r="0.68" fill="#d9dce1" stroke="none"/><circle cx="15.40" cy="29.80" r="0.68" fill="#d9dce1" stroke="none"/><circle cx="12.60" cy="25.65" r="0.68" fill="#d9dce1" stroke="none"/><circle cx="12.60" cy="28.35" r="0.68" fill="#d9dce1" stroke="none"/><circle cx="18.10" cy="25.65" r="0.68" fill="#d9dce1" stroke="none"/><circle cx="18.10" cy="28.35" r="0.68" fill="#d9dce1" stroke="none"/><path d="M11.70 25.50h0.5M18.90 25.50h1.2" stroke-width="1.1"/></svg><svg class="mn" width="20" height="20" viewBox="0 0 20 20"><circle cx="10" cy="10" r="8.8" fill="#2b2b52"/><path d="M10 1.1999999999999993A8.8 8.8 0 0 0 10 18.8A2.99 8.8 0 0 0 10 1.1999999999999993z" fill="#fff"/><circle cx="10" cy="10" r="8.8" fill="none" stroke="#000" stroke-width="1.55"/></svg><div class="evs"><div class="ev" style="color:#7c3aed"><span style="letter-spacing:0.108px">Deep Purple</span></div><div class="ev" style="color:#7c3aed"><b class="dot">•</b><span style="letter-spacing:0.108px">Deep Purple</span><br><span style="letter-spacing:0.054px">Dot</span></div><div class="ev bg" style="color:#a78bfa;background:#4c1d95"><span style="letter-spacing:0.108px">Deep Purple</span><br><span style="letter-spacing:-1.3px">BG</span></div></div></div><div class="day"><span class="num">6</span><svg class="wi" width="36" height="32" viewBox="0 0 36 32" fill="none" stroke="#d9dce1" stroke-width="1.25" stroke-linecap="round" stroke-linejoin="round"><path d="M10.60 25.39A3.20 3.20 0 1 1 11.00 19.00A3.70 3.70 0 0 1 18.35 18.42A3.60 3.60 0 1 1 20.30 25.33"/><circle cx="15.40" cy="24.30" r="0.68" fill="#d9dce1" stroke="none"/><circle cx="15.40" cy="27.05" r="0.68" fill="#d9dce1" stroke="none"/><circle cx="15.40" cy="29.80" r="0.68" fill="#d9dce1" stroke="none"/><circle cx="12.60" cy="25.65" r="0.68" fill="#d9dce1" stroke="none"/><circle cx="12.60" cy="28.35" r="0.68" fill="#d9dce1" stroke="none"/><circle cx="18.10" cy="25.65" r="0.68" fill="#d9dce1" stroke="none"/><circle cx="18.10" cy="28.35" r="0.68" fill="#d9dce1" stroke="none"/><path d="M11.70 25.50h0.5M18.90 25.50h1.2" stroke-width="1.1"/></svg><svg class="mn" width="20" height="20" viewBox="0 0 20 20"><circle cx="10" cy="10" r="8.8" fill="#2b2b52"/><path d="M10 1.1999999999999993A8.8 8.8 0 0 0 10 18.8A1.23 8.8 0 0 0 10 1.1999999999999993z" fill="#fff"/><circle cx="10" cy="10" r="8.8" fill="none" stroke="#000" stroke-width="1.55"/></svg><div class="evs"><div class="ev" style="color:#2563eb"><span style="letter-spacing:-0.302px">Blue</span></div><div class="ev" style="color:#2563eb"><b class="dot">•</b><span style="letter-spacing:-0.042px">Blue dot</span></div><div class="ev bg" style="color:#60a5fa;background:#1e3a8a"><span style="letter-spacing:-0.373px">Blue BG</span></div></div></div><div class="day"><span class="num">7</span><svg class="wi" width="36" height="32" viewBox="0 0 36 32" fill="none" stroke="#d9dce1" stroke-width="1.25" stroke-linecap="round" stroke-linejoin="round"><path d="M10.60 25.39A3.20 3.20 0 1 1 11.00 19.00A3.70 3.70 0 0 1 18.35 18.42A3.60 3.60 0 1 1 20.30 25.33"/><circle cx="15.40" cy="24.30" r="0.68" fill="#d9dce1" stroke="none"/><circle cx="15.40" cy="27.05" r="0.68" fill="#d9dce1" stroke="none"/><circle cx="15.40" cy="29.80" r="0.68" fill="#d9dce1" stroke="none"/><circle cx="12.60" cy="25.65" r="0.68" fill="#d9dce1" stroke="none"/><circle cx="12.60" cy="28.35" r="0.68" fill="#d9dce1" stroke="none"/><circle cx="18.10" cy="25.65" r="0.68" fill="#d9dce1" stroke="none"/><circle cx="18.10" cy="28.35" r="0.68" fill="#d9dce1" stroke="none"/><path d="M11.70 25.50h0.5M18.90 25.50h1.2" stroke-width="1.1"/></svg><svg class="mn" width="20" height="20" viewBox="0 0 20 20"><circle cx="10" cy="10" r="8.8" fill="#2b2b52"/><path d="M10 1.1999999999999993A8.8 8.8 0 0 0 10 18.8A0.79 8.8 0 0 0 10 1.1999999999999993z" fill="#fff"/><circle cx="10" cy="10" r="8.8" fill="none" stroke="#000" stroke-width="1.55"/></svg><div class="evs"><div class="ev" style="color:#0284c7"><span style="letter-spacing:-0.073px">Light Blue</span></div><div class="ev" style="color:#0284c7"><b class="dot">•</b><span style="letter-spacing:-0.073px">Light Blue</span><br><span style="letter-spacing:0.054px">Dot</span></div><div class="ev bg" style="color:#38bdf8;background:#0c4a6e"><span style="letter-spacing:-0.191px">Light Blue BG</span></div></div></div><div class="day"><span class="num">8</span><svg class="wi" width="36" height="32" viewBox="0 0 36 32" fill="none" stroke="#d9dce1" stroke-width="1.25" stroke-linecap="round" stroke-linejoin="round"><path d="M10.60 25.39A3.20 3.20 0 1 1 11.00 19.00A3.70 3.70 0 0 1 18.35 18.42A3.60 3.60 0 1 1 20.30 25.33"/><circle cx="15.40" cy="24.30" r="0.68" fill="#d9dce1" stroke="none"/><circle cx="15.40" cy="27.05" r="0.68" fill="#d9dce1" stroke="none"/><circle cx="15.40" cy="29.80" r="0.68" fill="#d9dce1" stroke="none"/><circle cx="12.60" cy="25.65" r="0.68" fill="#d9dce1" stroke="none"/><circle cx="12.60" cy="28.35" r="0.68" fill="#d9dce1" stroke="none"/><circle cx="18.10" cy="25.65" r="0.68" fill="#d9dce1" stroke="none"/><circle cx="18.10" cy="28.35" r="0.68" fill="#d9dce1" stroke="none"/><path d="M11.70 25.50h0.5M18.90 25.50h1.2" stroke-width="1.1"/></svg><svg class="mn" width="20" height="20" viewBox="0 0 20 20"><circle cx="10" cy="10" r="8.8" fill="#2b2b52"/><path d="M10 1.1999999999999993A8.8 8.8 0 0 0 10 18.8A0.00 8.8 0 0 0 10 1.1999999999999993z" fill="#fff"/><circle cx="10" cy="10" r="8.8" fill="none" stroke="#000" stroke-width="1.55"/></svg><div class="evs"><div class="ev" style="color:#0891b2"><span style="letter-spacing:0.085px">Cyan</span></div><div class="ev" style="color:#0891b2"><b class="dot">•</b><span style="letter-spacing:0.152px">Cyan dot</span></div><div class="ev bg" style="color:#22d3ee;background:#164e63"><span style="letter-spacing:-0.213px">Cyan BG</span></div></div></div><div class="day"><span class="num">9</span><svg class="wi" width="36" height="32" viewBox="0 0 36 32" fill="none" stroke="#d9dce1" stroke-width="1.25" stroke-linecap="round" stroke-linejoin="round"><path d="M10.60 25.39A3.20 3.20 0 1 1 11.00 19.00A3.70 3.70 0 0 1 18.35 18.42A3.60 3.60 0 1 1 20.30 25.33"/><circle cx="15.40" cy="24.30" r="0.68" fill="#d9dce1" stroke="none"/><circle cx="15.40" cy="27.05" r="0.68" fill="#d9dce1" stroke="none"/><circle cx="15.40" cy="29.80" r="0.68" fill="#d9dce1" stroke="none"/><circle cx="12.60" cy="25.65" r="0.68" fill="#d9dce1" stroke="none"/><circle cx="12.60" cy="28.35" r="0.68" fill="#d9dce1" stroke="none"/><circle cx="18.10" cy="25.65" r="0.68" fill="#d9dce1" stroke="none"/><circle cx="18.10" cy="28.35" r="0.68" fill="#d9dce1" stroke="none"/><path d="M11.70 25.50h0.5M18.90 25.50h1.2" stroke-width="1.1"/></svg><svg class="mn" width="20" height="20" viewBox="0 0 20 20"><circle cx="10" cy="10" r="8.8" fill="#2b2b52"/><path d="M10 1.1999999999999993A8.8 8.8 0 0 0 10 18.8A1.23 8.8 0 0 1 10 1.1999999999999993z" fill="#fff"/><circle cx="10" cy="10" r="8.8" fill="none" stroke="#000" stroke-width="1.55"/></svg><div class="evs"><div class="ev" style="color:#0d9488"><span style="letter-spacing:0.226px">Teal</span></div><div class="ev" style="color:#0d9488"><b class="dot">•</b><span style="letter-spacing:0.155px">Teal dot</span></div><div class="ev bg" style="color:#2dd4bf;background:#134e4a"><span style="letter-spacing:-0.143px">Teal BG</span></div></div></div><div class="day"><span class="num">10</span><svg class="wi" width="36" height="32" viewBox="0 0 36 32" fill="none" stroke="#d9dce1" stroke-width="1.25" stroke-linecap="round" stroke-linejoin="round"><path d="M10.60 25.39A3.20 3.20 0 1 1 11.00 19.00A3.70 3.70 0 0 1 18.35 18.42A3.60 3.60 0 1 1 20.30 25.33"/><circle cx="15.40" cy="24.30" r="0.68" fill="#d9dce1" stroke="none"/><circle cx="15.40" cy="27.05" r="0.68" fill="#d9dce1" stroke="none"/><circle cx="15.40" cy="29.80" r="0.68" fill="#d9dce1" stroke="none"/><circle cx="12.60" cy="25.65" r="0.68" fill="#d9dce1" stroke="none"/><circle cx="12.60" cy="28.35" r="0.68" fill="#d9dce1" stroke="none"/><circle cx="18.10" cy="25.65" r="0.68" fill="#d9dce1" stroke="none"/><circle cx="18.10" cy="28.35" r="0.68" fill="#d9dce1" stroke="none"/><path d="M11.70 25.50h0.5M18.90 25.50h1.2" stroke-width="1.1"/></svg><svg class="mn" width="20" height="20" viewBox="0 0 20 20"><circle cx="10" cy="10" r="8.8" fill="#2b2b52"/><path d="M10 1.1999999999999993A8.8 8.8 0 0 0 10 18.8A2.46 8.8 0 0 1 10 1.1999999999999993z" fill="#fff"/><circle cx="10" cy="10" r="8.8" fill="none" stroke="#000" stroke-width="1.55"/></svg><div class="evs"><div class="ev" style="color:#059669"><span style="letter-spacing:-0.021px">Green</span></div><div class="ev" style="color:#059669"><b class="dot">•</b><span style="letter-spacing:0.053px">Green dot</span></div><div class="ev bg" style="color:#34d399;background:#064e3b"><span style="letter-spacing:-0.174px">Green BG</span></div></div></div></div><div class="grid r2" style="top:327px;height:247px"><div class="day"><span class="num">11</span><svg class="wi" width="36" height="32" viewBox="0 0 36 32" fill="none" stroke="#d9dce1" stroke-width="1.25" stroke-linecap="round" stroke-linejoin="round"><path d="M10.60 25.50A3.10 3.10 0 1 1 11.23 19.36A3.60 3.60 0 0 1 18.39 18.62A3.50 3.50 0 1 1 19.30 25.50z"/></svg><svg class="mn" width="20" height="20" viewBox="0 0 20 20"><circle cx="10" cy="10" r="8.8" fill="#2b2b52"/><path d="M10 1.1999999999999993A8.8 8.8 0 0 0 10 18.8A4.58 8.8 0 0 1 10 1.1999999999999993z" fill="#fff"/><circle cx="10" cy="10" r="8.8" fill="none" stroke="#000" stroke-width="1.55"/></svg><div class="evs"><div class="ev" style="color:#16a34a"><span style="letter-spacing:0.016px">Light Green</span></div><div class="ev" style="color:#16a34a"><b class="dot">•</b><span style="letter-spacing:0.016px">Light Green</span><br><span style="letter-spacing:0.222px">dot</span></div><div class="ev bg" style="color:#4ade80;background:#14532d"><span style="letter-spacing:-0.129px">Light Green BG</span></div></div></div><div class="day"><span class="num">12</span><svg class="wi" width="36" height="32" viewBox="0 0 36 32" fill="none" stroke="#d9dce1" stroke-width="1.25" stroke-linecap="round" stroke-linejoin="round"><path d="M10.60 25.50A3.10 3.10 0 1 1 11.23 19.36A3.60 3.60 0 0 1 18.39 18.62A3.50 3.50 0 1 1 19.30 25.50z"/></svg><svg class="mn" width="20" height="20" viewBox="0 0 20 20"><circle cx="10" cy="10" r="8.8" fill="#2b2b52"/><path d="M10 1.1999999999999993A8.8 8.8 0 0 0 10 18.8A5.46 8.8 0 0 1 10 1.1999999999999993z" fill="#fff"/><circle cx="10" cy="10" r="8.8" fill="none" stroke="#000" stroke-width="1.55"/></svg><div class="evs"><div class="ev" style="color:#65a30d"><span style="letter-spacing:-0.036px">Lime</span></div><div class="ev" style="color:#65a30d"><b class="dot">•</b><span style="letter-spacing:-0.005px">Lime Dot</span></div><div class="ev bg" style="color:#a3e635;background:#365314"><span style="letter-spacing:-0.307px">Lime BG</span></div></div></div><div class="day"><span class="num">13</span><svg class="wi" width="36" height="32" viewBox="0 0 36 32" fill="none" stroke="#d9dce1" stroke-width="1.25" stroke-linecap="round" stroke-linejoin="round"><path d="M10.60 25.50A3.10 3.10 0 1 1 11.23 19.36A3.60 3.60 0 0 1 18.39 18.62A3.50 3.50 0 1 1 19.30 25.50z"/></svg><svg class="mn" width="20" height="20" viewBox="0 0 20 20"><circle cx="10" cy="10" r="8.8" fill="#2b2b52"/><path d="M10 1.1999999999999993A8.8 8.8 0 0 0 10 18.8A7.57 8.8 0 0 1 10 1.1999999999999993z" fill="#fff"/><circle cx="10" cy="10" r="8.8" fill="none" stroke="#000" stroke-width="1.55"/></svg><div class="evs"><div class="ev" style="color:#ca8a04"><span style="letter-spacing:0.03px">Yellow</span></div><div class="ev" style="color:#ca8a04"><b class="dot">•</b><span style="letter-spacing:0.062px">Yellow dot</span></div><div class="ev bg" style="color:#facc15;background:#713f12"><span style="letter-spacing:-0.16px">Yellow BG</span></div></div></div><div class="day"><span class="num">14</span><svg class="wi" width="36" height="32" viewBox="0 0 36 32" fill="none" stroke="#d9dce1" stroke-width="1.25" stroke-linecap="round" stroke-linejoin="round"><path d="M10.60 25.50A3.10 3.10 0 1 1 11.23 19.36A3.60 3.60 0 0 1 18.39 18.62A3.50 3.50 0 1 1 19.30 25.50z"/></svg><svg class="mn" width="20" height="20" viewBox="0 0 20 20"><circle cx="10" cy="10" r="8.8" fill="#2b2b52" stroke="#000" stroke-width="1.55"/></svg><div class="evs"><div class="ev" style="color:#ea580c"><span style="letter-spacing:0.137px">Orange</span></div><div class="ev" style="color:#ea580c"><b class="dot">•</b><span style="letter-spacing:0.088px">Orange dot</span></div><div class="ev bg" style="color:#fb923c;background:#7c2d12"><span style="letter-spacing:-0.131px">Orange BG</span></div></div></div><div class="day"><span class="num">15</span><svg class="wi" width="36" height="32" viewBox="0 0 36 32" fill="none" stroke="#d9dce1" stroke-width="1.25" stroke-linecap="round" stroke-linejoin="round"><path d="M8.70 25.50A3.30 3.30 0 1 1 8.50 18.91A3.40 3.40 0 0 1 15.07 17.67A4.05 4.05 0 1 1 16.40 25.50z"/><path d="M14.20 16.38A3.5 3.5 0 1 1 20.16 19.95" stroke-width="1.4"/><path d="M17.40 10.50L17.40 12.30" stroke-width="1.25" opacity="1"/><path d="M23.20 17.80L25.70 17.80" stroke-width="1.25" opacity="1"/><path d="M11.40 12.40L12.60 13.60" stroke-width="1.25" opacity="0.8"/><path d="M22.90 12.30L21.60 13.60" stroke-width="1.25" opacity="0.8"/><path d="M22.30 22.50L23.00 23.50" stroke-width="1.25" opacity="0.8"/></svg><svg class="mn" width="20" height="20" viewBox="0 0 20 20"><circle cx="10" cy="10" r="8.8" fill="#2b2b52" stroke="#000" stroke-width="1.55"/></svg><div class="evs"><div class="ev" style="color:#6b7280"><span style="letter-spacing:0.144px">Blue-gray</span></div><div class="ev" style="color:#6b7280"><b class="dot">•</b><span style="letter-spacing:0.155px">Blue-gray dot</span></div><div class="ev bg" style="color:#d1d5db;background:#111827"><span style="letter-spacing:-0.211px">Blue gray BG</span></div></div></div><div class="day today"><span class="num">16</span><svg class="wi" width="36" height="32" viewBox="0 0 36 32" fill="none" stroke="#d9dce1" stroke-width="1.25" stroke-linecap="round" stroke-linejoin="round"><path d="M8.70 25.50A3.30 3.30 0 1 1 8.50 18.91A3.40 3.40 0 0 1 15.07 17.67A4.05 4.05 0 1 1 16.40 25.50z"/><path d="M14.20 16.38A3.5 3.5 0 1 1 20.16 19.95" stroke-width="1.4"/><path d="M17.40 10.50L17.40 12.30" stroke-width="1.25" opacity="1"/><path d="M23.20 17.80L25.70 17.80" stroke-width="1.25" opacity="1"/><path d="M11.40 12.40L12.60 13.60" stroke-width="1.25" opacity="0.8"/><path d="M22.90 12.30L21.60 13.60" stroke-width="1.25" opacity="0.8"/><path d="M22.30 22.50L23.00 23.50" stroke-width="1.25" opacity="0.8"/></svg><svg class="mn" width="20" height="20" viewBox="0 0 20 20"><circle cx="10" cy="10" r="8.8" fill="#2b2b52" stroke="#000" stroke-width="1.55"/></svg><div class="evs"></div><i class="bar"></i></div><div class="day"><span class="num">17</span><svg class="wi" width="36" height="32" viewBox="0 0 36 32" fill="none" stroke="#d9dce1" stroke-width="1.25" stroke-linecap="round" stroke-linejoin="round"><circle cx="15.26" cy="20.5" r="3.5" stroke-width="1.55"/><path d="M21.1 20.5L23.3 20.5M19.4 24.6L20.9 26.2M15.3 26.3L15.3 28.5M11.2 24.6L9.6 26.2M9.5 20.5L7.3 20.5M11.2 16.4L9.6 14.8M15.3 14.7L15.3 12.5M19.4 16.4L20.9 14.8" stroke-width="1.3"/></svg><svg class="mn" width="20" height="20" viewBox="0 0 20 20"><circle cx="10" cy="10" r="8.8" fill="#2b2b52"/><path d="M10 1.1999999999999993A8.8 8.8 0 0 1 10 18.8A7.74 8.8 0 0 0 10 1.1999999999999993z" fill="#fff"/><circle cx="10" cy="10" r="8.8" fill="none" stroke="#000" stroke-width="1.55"/></svg><div class="evs"></div></div><div class="day"><span class="num">18</span><svg class="wi" width="36" height="32" viewBox="0 0 36 32" fill="none" stroke="#d9dce1" stroke-width="1.25" stroke-linecap="round" stroke-linejoin="round"><circle cx="15.26" cy="20.5" r="3.5" stroke-width="1.55"/><path d="M21.1 20.5L23.3 20.5M19.4 24.6L20.9 26.2M15.3 26.3L15.3 28.5M11.2 24.6L9.6 26.2M9.5 20.5L7.3 20.5M11.2 16.4L9.6 14.8M15.3 14.7L15.3 12.5M19.4 16.4L20.9 14.8" stroke-width="1.3"/></svg><svg class="mn" width="20" height="20" viewBox="0 0 20 20"><circle cx="10" cy="10" r="8.8" fill="#2b2b52"/><path d="M10 1.1999999999999993A8.8 8.8 0 0 1 10 18.8A7.04 8.8 0 0 0 10 1.1999999999999993z" fill="#fff"/><circle cx="10" cy="10" r="8.8" fill="none" stroke="#000" stroke-width="1.55"/></svg><div class="evs"></div></div><div class="day"><span class="num">19</span><svg class="wi" width="36" height="32" viewBox="0 0 36 32" fill="none" stroke="#d9dce1" stroke-width="1.25" stroke-linecap="round" stroke-linejoin="round"><path d="M8.70 25.50A3.30 3.30 0 1 1 8.50 18.91A3.40 3.40 0 0 1 15.07 17.67A4.05 4.05 0 1 1 16.40 25.50z"/><path d="M14.20 16.38A3.5 3.5 0 1 1 20.16 19.95" stroke-width="1.4"/><path d="M17.40 10.50L17.40 12.30" stroke-width="1.25" opacity="1"/><path d="M23.20 17.80L25.70 17.80" stroke-width="1.25" opacity="1"/><path d="M11.40 12.40L12.60 13.60" stroke-width="1.25" opacity="0.8"/><path d="M22.90 12.30L21.60 13.60" stroke-width="1.25" opacity="0.8"/><path d="M22.30 22.50L23.00 23.50" stroke-width="1.25" opacity="0.8"/></svg><svg class="mn" width="20" height="20" viewBox="0 0 20 20"><circle cx="10" cy="10" r="8.8" fill="#2b2b52"/><path d="M10 1.1999999999999993A8.8 8.8 0 0 1 10 18.8A4.58 8.8 0 0 0 10 1.1999999999999993z" fill="#fff"/><circle cx="10" cy="10" r="8.8" fill="none" stroke="#000" stroke-width="1.55"/></svg><div class="evs"></div></div><div class="day"><span class="num">20</span><svg class="wi" width="36" height="32" viewBox="0 0 36 32" fill="none" stroke="#d9dce1" stroke-width="1.25" stroke-linecap="round" stroke-linejoin="round"><path d="M10.60 25.50A3.10 3.10 0 1 1 11.23 19.36A3.60 3.60 0 0 1 18.39 18.62A3.50 3.50 0 1 1 19.30 25.50z"/></svg><svg class="mn" width="20" height="20" viewBox="0 0 20 20"><circle cx="10" cy="10" r="8.8" fill="#2b2b52"/><path d="M10 1.1999999999999993A8.8 8.8 0 0 1 10 18.8A2.64 8.8 0 0 0 10 1.1999999999999993z" fill="#fff"/><circle cx="10" cy="10" r="8.8" fill="none" stroke="#000" stroke-width="1.55"/></svg><div class="evs"></div></div></div><div class="grid r3" style="top:575px;height:127px"><div class="day"><span class="num">21</span><svg class="wi" width="36" height="32" viewBox="0 0 36 32" fill="none" stroke="#d9dce1" stroke-width="1.25" stroke-linecap="round" stroke-linejoin="round"><path d="M10.60 25.50A3.10 3.10 0 1 1 11.23 19.36A3.60 3.60 0 0 1 18.39 18.62A3.50 3.50 0 1 1 19.30 25.50z"/></svg><svg class="mn" width="20" height="20" viewBox="0 0 20 20"><circle cx="10" cy="10" r="8.8" fill="#2b2b52"/><path d="M10 1.1999999999999993A8.8 8.8 0 0 1 10 18.8A1.94 8.8 0 0 0 10 1.1999999999999993z" fill="#fff"/><circle cx="10" cy="10" r="8.8" fill="none" stroke="#000" stroke-width="1.55"/></svg><div class="evs"></div></div><div class="day"><span class="num">22</span><svg class="wi" width="36" height="32" viewBox="0 0 36 32" fill="none" stroke="#d9dce1" stroke-width="1.25" stroke-linecap="round" stroke-linejoin="round"><path d="M10.60 25.50A3.10 3.10 0 1 1 11.23 19.36A3.60 3.60 0 0 1 18.39 18.62A3.50 3.50 0 1 1 19.30 25.50z"/></svg><svg class="mn" width="20" height="20" viewBox="0 0 20 20"><circle cx="10" cy="10" r="8.8" fill="#2b2b52"/><path d="M10 1.1999999999999993A8.8 8.8 0 0 1 10 18.8A0.88 8.8 0 0 0 10 1.1999999999999993z" fill="#fff"/><circle cx="10" cy="10" r="8.8" fill="none" stroke="#000" stroke-width="1.55"/></svg><div class="evs"></div></div><div class="day"><span class="num">23</span><svg class="wi" width="36" height="32" viewBox="0 0 36 32" fill="none" stroke="#d9dce1" stroke-width="1.25" stroke-linecap="round" stroke-linejoin="round"><path d="M8.70 25.50A3.30 3.30 0 1 1 8.50 18.91A3.40 3.40 0 0 1 15.07 17.67A4.05 4.05 0 1 1 16.40 25.50z"/><path d="M14.20 16.38A3.5 3.5 0 1 1 20.16 19.95" stroke-width="1.4"/><path d="M17.40 10.50L17.40 12.30" stroke-width="1.25" opacity="1"/><path d="M23.20 17.80L25.70 17.80" stroke-width="1.25" opacity="1"/><path d="M11.40 12.40L12.60 13.60" stroke-width="1.25" opacity="0.8"/><path d="M22.90 12.30L21.60 13.60" stroke-width="1.25" opacity="0.8"/><path d="M22.30 22.50L23.00 23.50" stroke-width="1.25" opacity="0.8"/></svg><svg class="mn" width="20" height="20" viewBox="0 0 20 20"><circle cx="10" cy="10" r="8.8" fill="#2b2b52"/><path d="M10 1.1999999999999993A8.8 8.8 0 0 1 10 18.8A0.35 8.8 0 0 1 10 1.1999999999999993z" fill="#fff"/><circle cx="10" cy="10" r="8.8" fill="none" stroke="#000" stroke-width="1.55"/></svg><div class="evs"></div></div><div class="day"><span class="num">24</span><svg class="wi" width="36" height="32" viewBox="0 0 36 32" fill="none" stroke="#d9dce1" stroke-width="1.25" stroke-linecap="round" stroke-linejoin="round"><path d="M8.70 25.50A3.30 3.30 0 1 1 8.50 18.91A3.40 3.40 0 0 1 15.07 17.67A4.05 4.05 0 1 1 16.40 25.50z"/><path d="M14.20 16.38A3.5 3.5 0 1 1 20.16 19.95" stroke-width="1.4"/><path d="M17.40 10.50L17.40 12.30" stroke-width="1.25" opacity="1"/><path d="M23.20 17.80L25.70 17.80" stroke-width="1.25" opacity="1"/><path d="M11.40 12.40L12.60 13.60" stroke-width="1.25" opacity="0.8"/><path d="M22.90 12.30L21.60 13.60" stroke-width="1.25" opacity="0.8"/><path d="M22.30 22.50L23.00 23.50" stroke-width="1.25" opacity="0.8"/></svg><svg class="mn" width="20" height="20" viewBox="0 0 20 20"><circle cx="10" cy="10" r="8.8" fill="#2b2b52"/><path d="M10 1.1999999999999993A8.8 8.8 0 0 1 10 18.8A1.32 8.8 0 0 1 10 1.1999999999999993z" fill="#fff"/><circle cx="10" cy="10" r="8.8" fill="none" stroke="#000" stroke-width="1.55"/></svg><div class="evs"></div></div><div class="day"><span class="num">25</span><svg class="wi" width="36" height="32" viewBox="0 0 36 32" fill="none" stroke="#d9dce1" stroke-width="1.25" stroke-linecap="round" stroke-linejoin="round"><path d="M8.70 25.50A3.30 3.30 0 1 1 8.50 18.91A3.40 3.40 0 0 1 15.07 17.67A4.05 4.05 0 1 1 16.40 25.50z"/><path d="M14.20 16.38A3.5 3.5 0 1 1 20.16 19.95" stroke-width="1.4"/><path d="M17.40 10.50L17.40 12.30" stroke-width="1.25" opacity="1"/><path d="M23.20 17.80L25.70 17.80" stroke-width="1.25" opacity="1"/><path d="M11.40 12.40L12.60 13.60" stroke-width="1.25" opacity="0.8"/><path d="M22.90 12.30L21.60 13.60" stroke-width="1.25" opacity="0.8"/><path d="M22.30 22.50L23.00 23.50" stroke-width="1.25" opacity="0.8"/></svg><svg class="mn" width="20" height="20" viewBox="0 0 20 20"><circle cx="10" cy="10" r="8.8" fill="#2b2b52"/><path d="M10 1.1999999999999993A8.8 8.8 0 0 1 10 18.8A2.64 8.8 0 0 1 10 1.1999999999999993z" fill="#fff"/><circle cx="10" cy="10" r="8.8" fill="none" stroke="#000" stroke-width="1.55"/></svg><div class="evs"></div></div><div class="day"><span class="num">26</span><svg class="wi" width="36" height="32" viewBox="0 0 36 32" fill="none" stroke="#d9dce1" stroke-width="1.25" stroke-linecap="round" stroke-linejoin="round"><path d="M10.60 25.50A3.10 3.10 0 1 1 11.23 19.36A3.60 3.60 0 0 1 18.39 18.62A3.50 3.50 0 1 1 19.30 25.50z"/></svg><svg class="mn" width="20" height="20" viewBox="0 0 20 20"><circle cx="10" cy="10" r="8.8" fill="#2b2b52"/><path d="M10 1.1999999999999993A8.8 8.8 0 0 1 10 18.8A3.34 8.8 0 0 1 10 1.1999999999999993z" fill="#fff"/><circle cx="10" cy="10" r="8.8" fill="none" stroke="#000" stroke-width="1.55"/></svg><div class="evs"></div></div><div class="day"><span class="num">27</span><svg class="wi" width="36" height="32" viewBox="0 0 36 32" fill="none" stroke="#d9dce1" stroke-width="1.25" stroke-linecap="round" stroke-linejoin="round"><path d="M10.60 25.50A3.10 3.10 0 1 1 11.23 19.36A3.60 3.60 0 0 1 18.39 18.62A3.50 3.50 0 1 1 19.30 25.50z"/></svg><svg class="mn" width="20" height="20" viewBox="0 0 20 20"><circle cx="10" cy="10" r="8.8" fill="#2b2b52"/><path d="M10 1.1999999999999993A8.8 8.8 0 0 1 10 18.8A5.46 8.8 0 0 1 10 1.1999999999999993z" fill="#fff"/><circle cx="10" cy="10" r="8.8" fill="none" stroke="#000" stroke-width="1.55"/></svg><div class="evs"></div></div><div class="day"><span class="num">28</span><svg class="wi" width="36" height="32" viewBox="0 0 36 32" fill="none" stroke="#d9dce1" stroke-width="1.25" stroke-linecap="round" stroke-linejoin="round"><path d="M9.60 25.34A3.20 3.20 0 1 1 10.10 19.00A3.70 3.70 0 0 1 17.46 18.46A3.60 3.60 0 1 1 19.60 25.31"/><path d="M12.50 22.30L11.10 27.60M15.40 22.30L13.40 30.10M18.00 22.30L16.50 27.60" stroke-width="1.3"/></svg><svg class="mn" width="20" height="20" viewBox="0 0 20 20"><circle cx="10" cy="10" r="8.8" fill="#fff" stroke="#000" stroke-width="1.55"/></svg><div class="evs"></div></div><div class="day"><span class="num">29</span><svg class="wi" width="36" height="32" viewBox="0 0 36 32" fill="none" stroke="#d9dce1" stroke-width="1.25" stroke-linecap="round" stroke-linejoin="round"><path d="M10.60 25.39A3.20 3.20 0 1 1 11.00 19.00A3.70 3.70 0 0 1 18.35 18.42A3.60 3.60 0 1 1 20.30 25.33"/><circle cx="15.40" cy="24.30" r="0.68" fill="#d9dce1" stroke="none"/><circle cx="15.40" cy="27.05" r="0.68" fill="#d9dce1" stroke="none"/><circle cx="15.40" cy="29.80" r="0.68" fill="#d9dce1" stroke="none"/><circle cx="12.60" cy="25.65" r="0.68" fill="#d9dce1" stroke="none"/><circle cx="12.60" cy="28.35" r="0.68" fill="#d9dce1" stroke="none"/><circle cx="18.10" cy="25.65" r="0.68" fill="#d9dce1" stroke="none"/><circle cx="18.10" cy="28.35" r="0.68" fill="#d9dce1" stroke="none"/><path d="M11.70 25.50h0.5M18.90 25.50h1.2" stroke-width="1.1"/></svg><svg class="mn" width="20" height="20" viewBox="0 0 20 20"><circle cx="10" cy="10" r="8.8" fill="#fff" stroke="#000" stroke-width="1.55"/></svg><div class="evs"></div></div><div class="day"><span class="num">30</span><svg class="wi" width="36" height="32" viewBox="0 0 36 32" fill="none" stroke="#d9dce1" stroke-width="1.25" stroke-linecap="round" stroke-linejoin="round"><circle cx="15.26" cy="20.5" r="3.5" stroke-width="1.55"/><path d="M21.1 20.5L23.3 20.5M19.4 24.6L20.9 26.2M15.3 26.3L15.3 28.5M11.2 24.6L9.6 26.2M9.5 20.5L7.3 20.5M11.2 16.4L9.6 14.8M15.3 14.7L15.3 12.5M19.4 16.4L20.9 14.8" stroke-width="1.3"/></svg><svg class="mn" width="20" height="20" viewBox="0 0 20 20"><circle cx="10" cy="10" r="8.8" fill="#fff" stroke="#000" stroke-width="1.55"/></svg><div class="evs"></div></div></div></div>
<div class="card" style="top:814px;height:196px"><div class="mt" style="height:36px;line-height:37px"><span style="letter-spacing:0.673px">Midwinter</span></div><div class="grid" style="top:38px;height:158px"><div class="day"><span class="num">1</span><svg class="wi" width="36" height="32" viewBox="0 0 36 32" fill="none" stroke="#d9dce1" stroke-width="1.25" stroke-linecap="round" stroke-linejoin="round"><circle cx="15.26" cy="20.5" r="3.5" stroke-width="1.55"/><path d="M21.1 20.5L23.3 20.5M19.4 24.6L20.9 26.2M15.3 26.3L15.3 28.5M11.2 24.6L9.6 26.2M9.5 20.5L7.3 20.5M11.2 16.4L9.6 14.8M15.3 14.7L15.3 12.5M19.4 16.4L20.9 14.8" stroke-width="1.3"/></svg><svg class="mn" width="20" height="20" viewBox="0 0 20 20"><circle cx="10" cy="10" r="8.8" fill="#fff" stroke="#000" stroke-width="1.55"/></svg><div class="evs"><div class="ev" style="color:#dc2626"><span style="letter-spacing:0.363px">Midwinter</span></div></div></div><div class="day"></div><div class="day"></div><div class="day"></div><div class="day"></div><div class="day"></div><div class="day"></div><div class="day"></div><div class="day"></div><div class="day"></div><i class="stripes"></i></div></div>
<div class="card" style="top:1058px;height:60px"><div class="mt"><span style="letter-spacing:0.287px">Alturiak (The Claw of Winter)</span></div></div>
</div>
</body>
</html>
